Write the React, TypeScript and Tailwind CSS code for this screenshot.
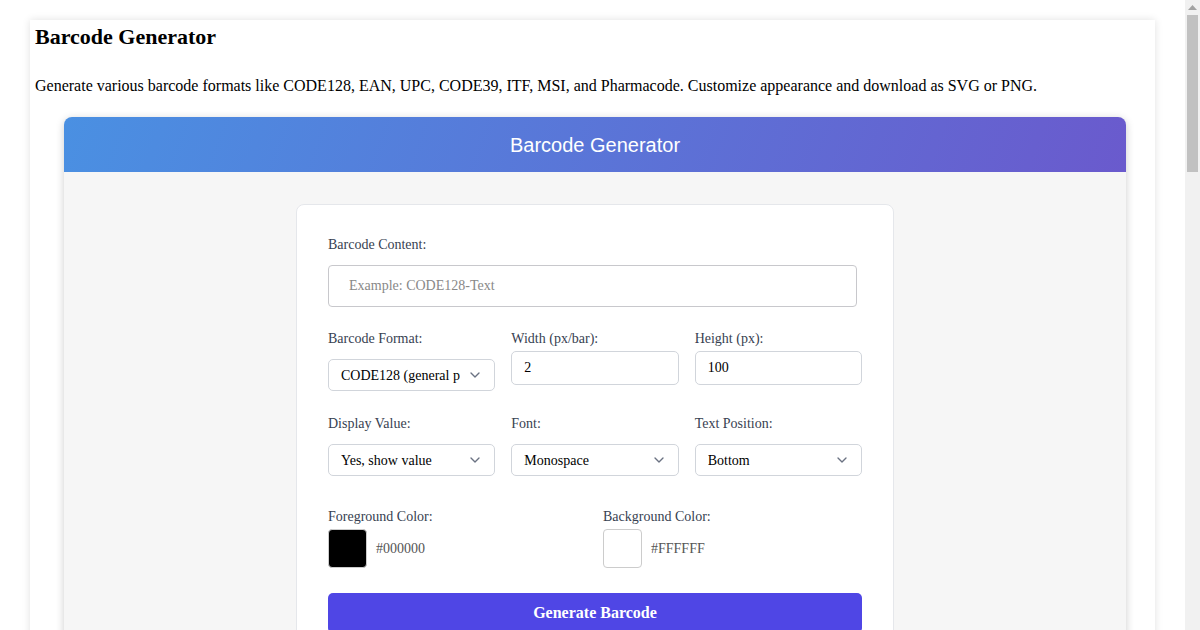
import { useState } from "react";

function Chevron() {
  return (
    <svg
      className="pointer-events-none absolute right-[12px] top-1/2 h-[16px] w-[16px] -translate-y-1/2 text-gray-500"
      fill="none"
      stroke="currentColor"
      viewBox="0 0 24 24"
    >
      <path strokeLinecap="round" strokeLinejoin="round" strokeWidth="2" d="M6 9l6 6 6-6" />
    </svg>
  );
}

function SelectBox({ value, options }: { value: string; options: string[] }) {
  return (
    <div className="relative">
      <select
        defaultValue={value}
        className="h-[32px] w-full appearance-none rounded-[5px] border border-[#d1d5db] bg-white pl-[12px] pr-[34px] text-[14px] text-black outline-none"
      >
        {options.map((o) => (
          <option key={o}>{o}</option>
        ))}
      </select>
      <Chevron />
    </div>
  );
}

function Label({ children }: { children: string }) {
  return <label className="block text-[14px] leading-[20px] text-[#374151]">{children}</label>;
}

export default function App() {
  const [fg] = useState("#000000");
  const [bg] = useState("#FFFFFF");

  return (
    <div className="flex h-[630px] overflow-hidden bg-white font-['Liberation_Serif',serif]">
      <div className="flex-1 overflow-hidden pt-[20px]">
        <div className="mx-[30px] min-h-[2300px] bg-white p-[5px] shadow-[0_0_8px_rgba(0,0,0,0.12)]">
          <h2 className="text-[22px] font-bold leading-[24px] text-black">Barcode Generator</h2>
          <p className="mt-[27px] text-[16px] leading-[20px] text-black">
            Generate various barcode formats like CODE128, EAN, UPC, CODE39, ITF, MSI, and Pharmacode. Customize appearance and download as SVG or PNG.
          </p>

          <div className="ml-[29px] mt-[21px] w-[1062px] overflow-hidden rounded-[8px] bg-[#f6f6f6] shadow-[0_2px_8px_rgba(0,0,0,0.2)]">
            <div className="flex h-[55px] items-center justify-center bg-[linear-gradient(110deg,#4a90e2,#6a5acd)] font-['Liberation_Sans',sans-serif] text-[20px] text-white">
              Barcode Generator
            </div>

            <div className="px-[232px] pb-[40px] pt-[32px]">
              <div className="rounded-[8px] border border-[#e5e7eb] bg-white px-[31px] pb-[30px] pt-[30px]">
                <Label>Barcode Content:</Label>
                <input
                  placeholder="Example: CODE128-Text"
                  className="mt-[10px] h-[42px] w-[529px] rounded-[4px] border border-[#c8c8cc] bg-white px-[20px] text-[14px] text-black placeholder:text-[#888] outline-none"
                />

                <div className="mt-[22px] grid grid-cols-3 gap-x-[16px]">
                  <div>
                    <Label>Barcode Format:</Label>
                    <div className="mt-[10px]">
                      <SelectBox
                        value="CODE128 (general purpose)"
                        options={["CODE128 (general purpose)", "EAN-13", "UPC", "CODE39", "ITF", "MSI", "Pharmacode"]}
                      />
                    </div>
                  </div>
                  <div>
                    <Label>Width (px/bar):</Label>
                    <input
                      defaultValue="2"
                      className="mt-[2px] h-[34px] w-full rounded-[5px] border border-[#d1d5db] px-[12px] text-[14px] text-black outline-none"
                    />
                  </div>
                  <div>
                    <Label>Height (px):</Label>
                    <input
                      defaultValue="100"
                      className="mt-[2px] h-[34px] w-full rounded-[5px] border border-[#d1d5db] px-[12px] text-[14px] text-black outline-none"
                    />
                  </div>
                </div>

                <div className="mt-[23px] grid grid-cols-3 gap-x-[16px]">
                  <div>
                    <Label>Display Value:</Label>
                    <div className="mt-[10px]">
                      <SelectBox value="Yes, show value" options={["Yes, show value", "No, hide value"]} />
                    </div>
                  </div>
                  <div>
                    <Label>Font:</Label>
                    <div className="mt-[10px]">
                      <SelectBox value="Monospace" options={["Monospace", "Sans-serif", "Serif"]} />
                    </div>
                  </div>
                  <div>
                    <Label>Text Position:</Label>
                    <div className="mt-[10px]">
                      <SelectBox value="Bottom" options={["Bottom", "Top"]} />
                    </div>
                  </div>
                </div>

                <div className="mt-[31px] grid grid-cols-2 gap-x-[16px]">
                  <div>
                    <Label>Foreground Color:</Label>
                    <div className="mt-[2px] flex items-center gap-[9px]">
                      <div className="h-[39px] w-[39px] rounded-[4px] border border-[#ccc] bg-black" />
                      <span className="text-[14px] text-[#555]">{fg}</span>
                    </div>
                  </div>
                  <div>
                    <Label>Background Color:</Label>
                    <div className="mt-[2px] flex items-center gap-[9px]">
                      <div className="h-[39px] w-[39px] rounded-[4px] border border-[#ccc] bg-white" />
                      <span className="text-[14px] text-[#555]">{bg}</span>
                    </div>
                  </div>
                </div>

                <button className="mt-[25px] h-[40px] w-full rounded-[5px] bg-[#4f46e5] text-[16px] font-bold text-white">
                  Generate Barcode
                </button>
              </div>
            </div>
          </div>
        </div>
      </div>

      {/* page scrollbar */}
      <div className="flex w-[15px] shrink-0 flex-col items-center bg-[#f1f1f1]">
        <svg className="mt-[5px] h-[5px] w-[9px] text-[#a3a3a3]" viewBox="0 0 9 5" fill="currentColor">
          <path d="M4.5 0L9 5H0z" />
        </svg>
        <div className="mt-[5px] h-[157px] w-[11px] bg-[#c1c1c1]" />
      </div>
    </div>
  );
}
